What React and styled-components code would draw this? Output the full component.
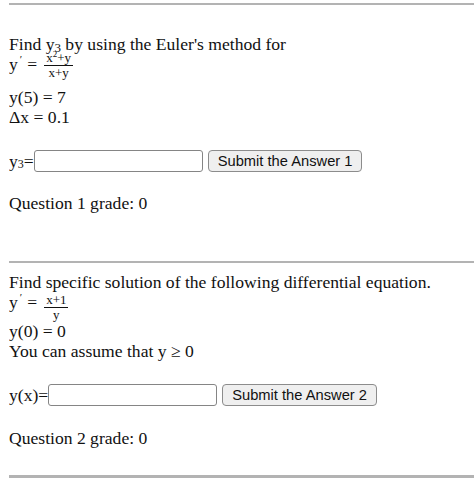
import React from "react";
import styled, { createGlobalStyle } from "styled-components";

const GlobalStyle = createGlobalStyle`
  body {
    margin: 0 0 0 9px;
    background: #ffffff;
    color: #111111;
    font-family: "Liberation Serif", "Times New Roman", serif;
    font-size: 17.6px;
    overflow: hidden;
  }
`;

const Rule = styled.div`
  height: 0;
  border-top: ${(p) => p.$thick || 2}px solid #b3b3b3;
  margin-top: ${(p) => p.$top || 0}px;
`;

const Question = styled.section`
  padding-top: ${(p) => p.$top}px;
  padding-bottom: ${(p) => p.$bottom}px;
`;

const Line = styled.div`
  line-height: 20px;
  white-space: nowrap;
`;

const FracLine = styled.div`
  display: flex;
  align-items: flex-start;
  height: ${(p) => p.$h}px;
  line-height: 20px;
`;

const Prime = styled.sup`
  font-size: 11px;
  vertical-align: 7px;
  line-height: 0;
  margin-left: 2px;
  margin-right: 5px;
`;

const Frac = styled.span`
  display: inline-flex;
  flex-direction: column;
  align-items: center;
  font-size: 13px;
  line-height: 14px;
  margin-top: ${(p) => p.$shift}px;
  margin-left: 9px;
`;

const Bar = styled.span`
  align-self: stretch;
  border-top: 1px solid #111111;
  margin: 0 -2px;
`;

const Sub = styled.sub`
  font-size: ${(p) => p.$size || 13}px;
  line-height: 0;
  vertical-align: ${(p) => p.$drop || -2}px;
`;

const Sup = styled.sup`
  font-size: 9px;
  line-height: 0;
  vertical-align: 5px;
`;

const AnswerRow = styled.div`
  display: flex;
  align-items: center;
  margin-top: ${(p) => p.$top}px;
  height: 22px;
`;

const Label = styled.span`
  line-height: 20px;
`;

const AnswerInput = styled.input`
  box-sizing: border-box;
  width: 169px;
  height: 22px;
  border: 1px solid #858585;
  border-radius: 3px;
  padding: 1px 3px;
  font-size: 14px;
  background: #ffffff;
`;

const SubmitButton = styled.button`
  box-sizing: border-box;
  height: 22px;
  margin-left: 5px;
  padding: 0 9px;
  border: 1px solid #8c8c8c;
  border-radius: 4px;
  background: #efefef;
  color: #111111;
  font-family: "Liberation Sans", Arial, sans-serif;
  font-size: 14.7px;
  line-height: 20px;
  cursor: pointer;
`;

const Grade = styled.div`
  margin-top: ${(p) => p.$top}px;
  line-height: 20px;
`;

export default function App() {
  return (
    <>
      <GlobalStyle />
      <Rule $top={3} />
      <Question $top={29} $bottom={48}>
        <Line>
          Find y<Sub>3</Sub> by using the Euler's method for
        </Line>
        <FracLine $h={33}>
          <span>
            y<Prime>′</Prime>=
          </span>
          <Frac $shift={-3}>
            <span>
              x<Sup>2</Sup>+y
            </span>
            <Bar />
            <span>x+y</span>
          </Frac>
        </FracLine>
        <Line>y(5) = 7</Line>
        <Line>Δx = 0.1</Line>
        <AnswerRow $top={23}>
          <Label>
            y<Sub $size={12} $drop={-1}>3</Sub>=
          </Label>
          <AnswerInput type="text" />
          <SubmitButton>Submit the Answer 1</SubmitButton>
        </AnswerRow>
        <Grade $top={21}>Question 1 grade: 0</Grade>
      </Question>
      <Rule />
      <Question $top={9} $bottom={27}>
        <Line>Find specific solution of the following differential equation.</Line>
        <FracLine $h={29}>
          <span>
            y<Prime>′</Prime>=
          </span>
          <Frac $shift={1}>
            <span>x+1</span>
            <Bar />
            <span>y</span>
          </Frac>
        </FracLine>
        <Line>y(0) = 0</Line>
        <Line>You can assume that y ≥ 0</Line>
        <AnswerRow $top={23}>
          <Label>y(x)=</Label>
          <AnswerInput type="text" />
          <SubmitButton>Submit the Answer 2</SubmitButton>
        </AnswerRow>
        <Grade $top={22}>Question 2 grade: 0</Grade>
      </Question>
      <Rule $thick={3} />
    </>
  );
}
